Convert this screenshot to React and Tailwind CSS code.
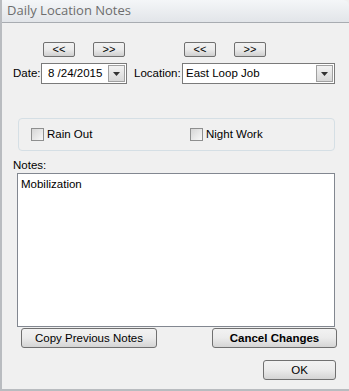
import React from 'react';

// Small classic push button
function NavButton({ label }) {
  return (
    <button className="w-[32px] h-[15px] rounded-[2px] border border-[#707070] bg-gradient-to-b from-[#f2f2f2] via-[#ebebeb] to-[#cfcfcf] text-[11px] leading-[13px] text-black flex items-center justify-center">
      {label}
    </button>
  );
}

function DropArrow() {
  return (
    <div className="w-[17px] h-[17px] border border-[#a0a0a0] bg-gradient-to-b from-[#f2f2f2] to-[#d8d8d8] flex items-center justify-center">
      <svg width="7" height="4" viewBox="0 0 7 4">
        <path d="M0 0h7L3.5 4z" fill="#333" />
      </svg>
    </div>
  );
}

function Checkbox({ label }) {
  return (
    <label className="flex items-center gap-[3px]">
      <span className="w-[13px] h-[13px] border border-[#8e8f8f] bg-gradient-to-br from-[#d6d6d6] to-[#f8f8f8]" />
      <span>{label}</span>
    </label>
  );
}

function PushButton({ label, bold, className }) {
  return (
    <button
      className={`h-[20px] rounded-[3px] border border-[#707070] bg-gradient-to-b from-[#f2f2f2] via-[#ebebeb] to-[#d4d4d4] text-[11.5px] leading-[18px] text-black ${bold ? 'font-bold' : ''} ${className}`}
    >
      {label}
    </button>
  );
}

export default function App() {
  return (
    <div
      className="w-[349px] h-[391px] bg-[#f0f0f0] text-[11.5px] text-black overflow-hidden"
      style={{ fontFamily: '"Liberation Sans", Arial, sans-serif' }}
    >
      <div className="h-[391px] border-l-2 border-b-2 border-[#b9bcc0] rounded-tr-[6px] flex flex-col">
        {/* Title bar */}
        <div className="h-[23px] shrink-0 bg-gradient-to-b from-[#f4f6f8] to-[#e2e5e9] border-b border-[#a8acb1] rounded-tr-[6px] flex items-center pl-[5px]">
          <span className="text-[13px] text-[#6d6d6d]" style={{ fontFamily: '"Open Sans", "Liberation Sans", sans-serif' }}>
            Daily Location Notes
          </span>
        </div>

        <div className="flex flex-col pl-[10px] pr-[12px]">
          {/* Navigation buttons */}
          <div className="flex mt-[19px] h-[15px]">
            <div className="ml-[31px] flex gap-[18px]">
              <NavButton label="<<" />
              <NavButton label=">>" />
            </div>
            <div className="ml-[59px] flex gap-[18px]">
              <NavButton label="<<" />
              <NavButton label=">>" />
            </div>
          </div>

          {/* Date / Location */}
          <div className="flex items-center mt-[6px] h-[21px]">
            <span className="w-[29px] pl-[1px]">Date:</span>
            <div className="w-[86px] h-[21px] border border-[#7a7a7a] bg-white flex items-center justify-between pl-[6px] pr-[1px]">
              <span>8 /24/2015</span>
              <DropArrow />
            </div>
            <span className="ml-[7px] w-[48px]">Location:</span>
            <div className="w-[153px] h-[21px] border border-[#7a7a7a] bg-white flex items-center justify-between pl-[3px] pr-[1px]">
              <span>East Loop Job</span>
              <DropArrow />
            </div>
          </div>

          {/* Options group */}
          <div className="mt-[34px] ml-[6px] w-[317px] h-[33px] border border-[#d5dfe5] rounded-[4px] flex items-center">
            <div className="ml-[12px] w-[159px]">
              <Checkbox label="Rain Out" />
            </div>
            <Checkbox label="Night Work" />
          </div>

          {/* Notes */}
          <div className="mt-[6px] h-[16px] leading-[16px] pl-[1px]">Notes:</div>
          <div className="ml-[5px] w-[318px] h-[154px] border border-[#828790] bg-white px-[3px] pt-[2px]">
            Mobilization
          </div>

          {/* Buttons */}
          <div className="flex justify-between mt-[1px] pl-[9px]">
            <PushButton label="Copy Previous Notes" className="w-[136px]" />
            <PushButton label="Cancel Changes" bold className="w-[125px]" />
          </div>
          <div className="flex justify-end mt-[12px] pr-[1px]">
            <PushButton label="OK" className="w-[73px]" />
          </div>
        </div>
      </div>
    </div>
  );
}
